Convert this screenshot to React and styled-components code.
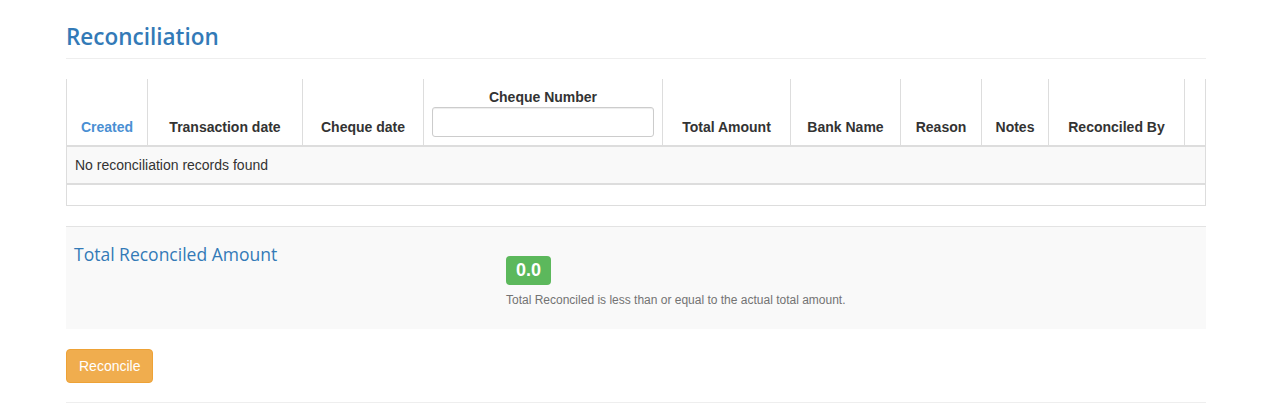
import React from 'react';
import styled, { createGlobalStyle } from 'styled-components';

const GlobalStyle = createGlobalStyle`
  body {
    margin: 0;
    background: #fff;
    font-family: "Liberation Sans", Arial, sans-serif;
    font-size: 14px;
    line-height: 1.42857;
    color: #333;
  }
`;

const columns = [
  { label: 'Created', width: 81, link: true },
  { label: 'Transaction date', width: 155 },
  { label: 'Cheque date', width: 121 },
  { label: 'Cheque Number', width: 239, filter: true },
  { label: 'Total Amount', width: 128 },
  { label: 'Bank Name', width: 110 },
  { label: 'Reason', width: 81 },
  { label: 'Notes', width: 67 },
  { label: 'Reconciled By', width: 136 },
  { label: '', width: 21 },
];

const App = () => (
  <>
    <GlobalStyle />
    <Container>
      <PageHeader>
        <Title>Reconciliation</Title>
      </PageHeader>

      <Table>
        <colgroup>
          {columns.map((c, i) => (
            <col key={i} style={{ width: c.width }} />
          ))}
        </colgroup>
        <thead>
          <tr>
            {columns.map((c, i) => (
              <HeadCell key={i} $link={c.link}>
                {c.filter ? (
                  <>
                    <div>{c.label}</div>
                    <FilterInput type="text" />
                  </>
                ) : (
                  c.label
                )}
              </HeadCell>
            ))}
          </tr>
        </thead>
        <tbody>
          <EmptyRow>
            <Cell colSpan={columns.length}>No reconciliation records found</Cell>
          </EmptyRow>
        </tbody>
        <FootBody>
          <tr>
            <SpacerCell colSpan={columns.length} />
          </tr>
        </FootBody>
      </Table>

      <Summary>
        <SummaryTitle>Total Reconciled Amount</SummaryTitle>
        <SummaryValue>
          <Badge>0.0</Badge>
          <HelpText>Total Reconciled is less than or equal to the actual total amount.</HelpText>
        </SummaryValue>
      </Summary>

      <Actions>
        <WarningButton type="button">Reconcile</WarningButton>
      </Actions>
    </Container>
  </>
);

const Container = styled.div`
  width: 1140px;
  margin-left: 66px;
  padding-top: 20px;
`;

const PageHeader = styled.div`
  border-bottom: 1px solid #eee;
  padding-bottom: 4px;
  margin-bottom: 20px;
`;

const Title = styled.h1`
  margin: 0;
  font-family: "Open Sans", sans-serif;
  font-weight: 600;
  font-size: 22.5px;
  line-height: 34px;
  color: #337ab7;
`;

const Table = styled.table`
  width: 1139px;
  table-layout: fixed;
  border-collapse: collapse;
  border-spacing: 0;
  border: 1px solid #ddd;
  border-top: 0;
  margin-bottom: 20px;
`;

const HeadCell = styled.th`
  padding: 8px;
  border-left: 1px solid #ddd;
  border-right: 1px solid #ddd;
  border-bottom: 2px solid #ddd;
  vertical-align: bottom;
  text-align: center;
  font-weight: bold;
  font-size: 14px;
  line-height: 20px;
  height: 50px;
  color: ${(p) => (p.$link ? '#4a8fd3' : '#333')};
`;

const FilterInput = styled.input`
  display: block;
  box-sizing: border-box;
  width: 100%;
  height: 30px;
  padding: 5px 10px;
  font-size: 12px;
  border: 1px solid #ccc;
  border-radius: 3px;
  background: #fff;
  box-shadow: inset 0 1px 1px rgba(0, 0, 0, 0.075);
`;

const EmptyRow = styled.tr`
  background: #f9f9f9;
`;

const Cell = styled.td`
  padding: 8px;
  line-height: 20px;
  font-size: 14px;
  color: #333;
`;

const FootBody = styled.tbody`
  border-top: 2px solid #ddd;
`;

const SpacerCell = styled.td`
  height: 20px;
  padding: 0;
`;

const Summary = styled.div`
  display: grid;
  grid-template-columns: 432px 1fr;
  background: #f9f9f9;
  border-top: 1px solid #e3e3e3;
  padding: 16px 8px 20px;
`;

const SummaryTitle = styled.h3`
  margin: 0;
  font-family: "Open Sans", sans-serif;
  font-weight: 500;
  font-size: 17.5px;
  line-height: 22px;
  color: #337ab7;
`;

const SummaryValue = styled.div`
  padding-top: 13px;
`;

const Badge = styled.span`
  display: inline-block;
  padding: 4px 10px 5px;
  font-size: 18px;
  font-weight: bold;
  line-height: 20px;
  color: #fff;
  background: #5cb85c;
  border-radius: 4px;
`;

const HelpText = styled.p`
  margin: 7px 0 0;
  font-size: 12px;
  line-height: 17px;
  color: #737373;
`;

const Actions = styled.div`
  padding: 20px 0 19px;
  border-bottom: 1px solid #eee;
`;

const WarningButton = styled.button`
  display: inline-block;
  height: 34px;
  padding: 6px 12px;
  font-family: "Liberation Sans", Arial, sans-serif;
  font-size: 14px;
  line-height: 20px;
  color: #fff;
  background: #f0ad4e;
  border: 1px solid #eea236;
  border-radius: 4px;
  cursor: pointer;
`;

export default App;
